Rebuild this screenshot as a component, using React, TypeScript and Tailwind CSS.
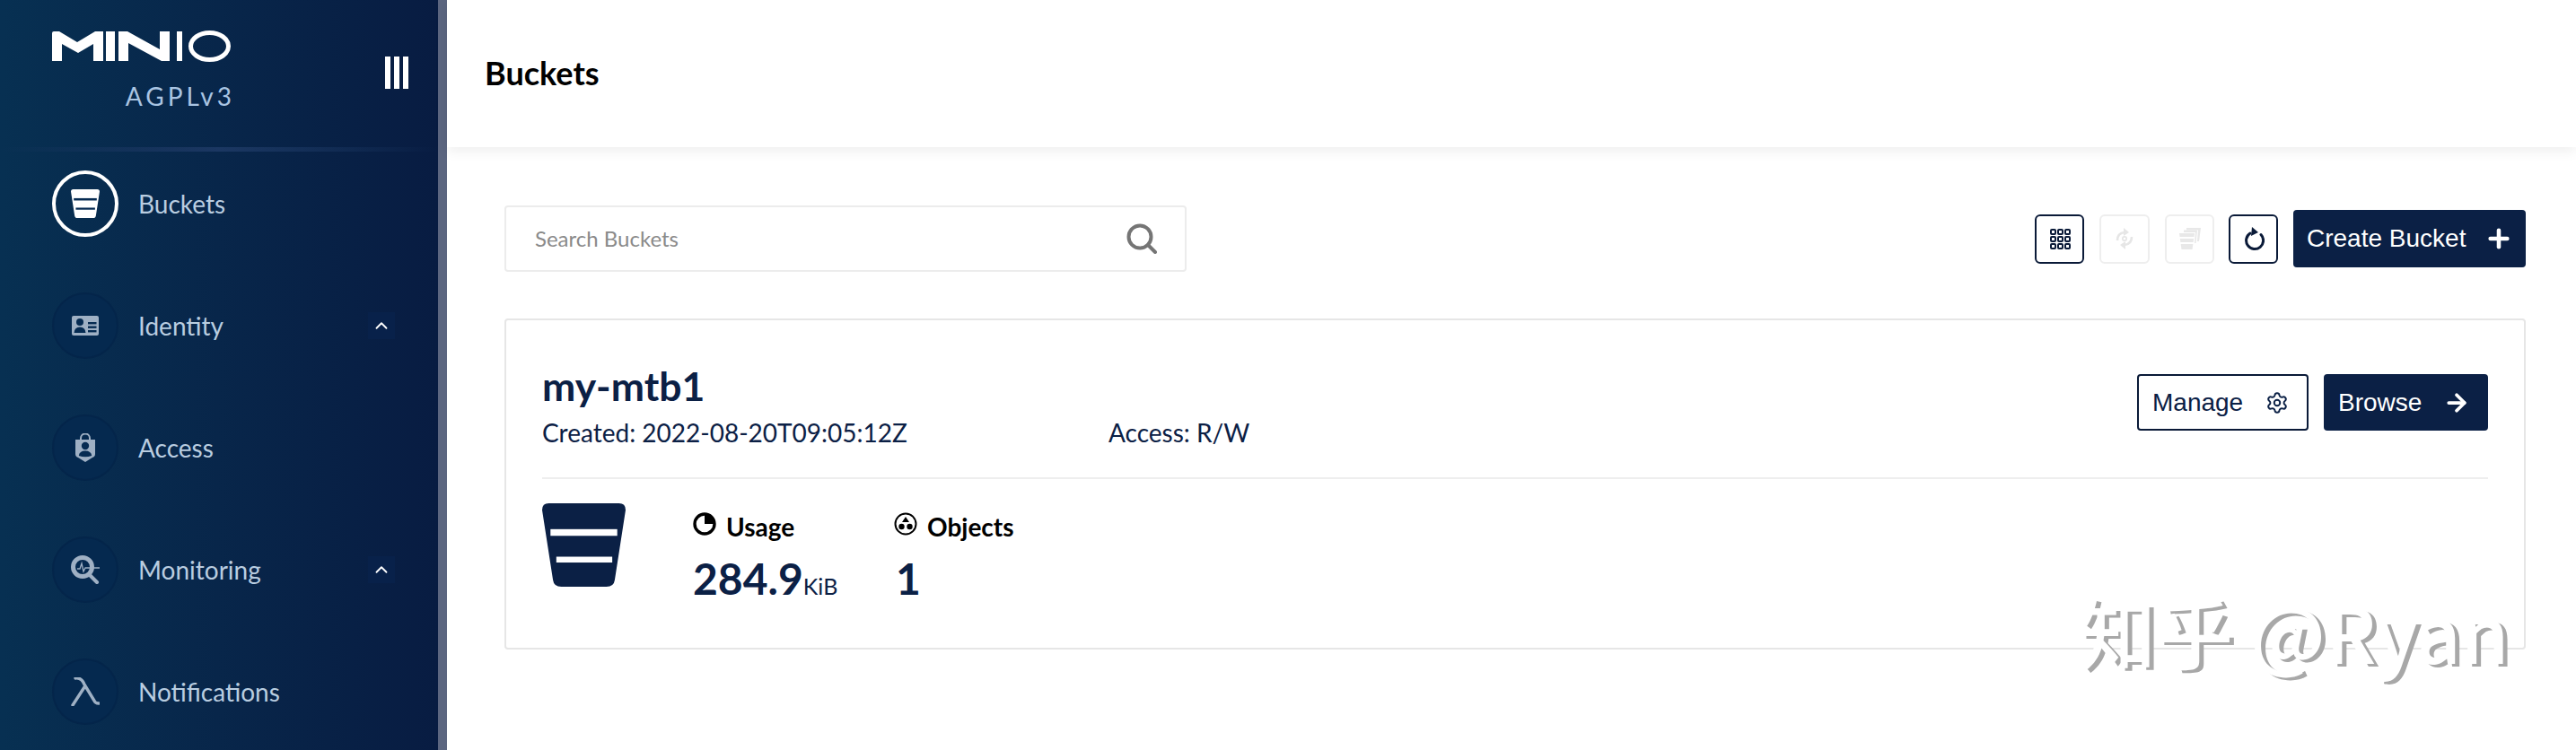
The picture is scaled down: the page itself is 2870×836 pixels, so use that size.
import React from 'react';
import { ChevronUp, Settings, ArrowRight, Plus } from 'lucide-react';

const MinioLogo = () => (
    <svg width="200" height="35" viewBox="0 0 200 35" className="block" fill="#fff">
        <path d="M0 3 Q0 1 2 1 H8 L28 13 L48 1 H57 V34 H46 V15 L29 25 L11 15 V34 H0 Z" />
        <rect x="60" y="1" width="10" height="33" />
        <path d="M74 34 V1 H84 L120 21 V1 H131 V34 H122 L85 14 V34 Z" />
        <rect x="139" y="1" width="6" height="33" />
        <ellipse cx="175.5" cy="17.5" rx="21" ry="15" fill="none" stroke="#fff" strokeWidth="5" />
    </svg>
);

const BucketIcon = ({ size, fill, line }: { size: number; fill: string; line: string }) => (
    <svg width={size} height={size} viewBox="0 0 100 100" className="block">
        <path d="M8 0 H92 Q100 0 100 8 L87 92 Q86 100 77 100 H23 Q14 100 13 92 L0 8 Q0 0 8 0 Z" fill={fill} />
        <rect x="10" y="31" width="80" height="8" fill={line} />
        <rect x="17" y="64" width="67" height="7" fill={line} />
    </svg>
);

const IdentityIcon = () => (
    <svg width="30" height="22" viewBox="0 0 30 22">
        <rect width="30" height="22" rx="2" fill="#9fb0c4" />
        <circle cx="9" cy="7" r="4" fill="#062b52" />
        <path d="M2.5 19 Q3 12.5 9 12.5 Q15 12.5 15.5 19 Z" fill="#062b52" />
        <rect x="18" y="7" width="9.5" height="2.4" fill="#062b52" />
        <rect x="18" y="11.5" width="9.5" height="2.4" fill="#062b52" />
        <rect x="18" y="16" width="9.5" height="2.4" fill="#062b52" />
    </svg>
);

const AccessIcon = () => (
    <svg width="24" height="32" viewBox="0 0 24 32">
        <path d="M7 8 V5.5 a5 5 0 0 1 10 0 V8" fill="none" stroke="#9fb0c4" strokeWidth="2" />
        <path d="M1 7 H23 V23 Q23 26 20 27 L12 32 L4 27 Q1 26 1 23 Z" fill="#9fb0c4" />
        <circle cx="12" cy="14" r="4.2" fill="#062b52" />
        <path d="M4.8 25 Q5.5 19.5 12 19.5 Q18.5 19.5 19.2 25 Q12 27.5 4.8 25 Z" fill="#062b52" />
    </svg>
);

const MonitoringIcon = () => (
    <svg width="32" height="32" viewBox="0 0 32 32">
        <circle cx="13" cy="13" r="10.5" fill="none" stroke="#9fb0c4" strokeWidth="5" />
        <path d="M20 21 L29 30" stroke="#9fb0c4" strokeWidth="4" strokeLinecap="round" />
        <path d="M7 15 H10 L12 9 L14 18 L16 14 H32" fill="none" stroke="#9fb0c4" strokeWidth="1.3" />
    </svg>
);

const LambdaIcon = () => (
    <svg width="32" height="32" viewBox="0 0 32 32">
        <path
            d="M5 1 Q12 0 15 8 L26 26 Q27 29 31 29 M15 11 L2 31"
            fill="none"
            stroke="#9fb0c4"
            strokeWidth="3.4"
            strokeLinecap="round"
        />
    </svg>
);

const GridIcon = () => (
    <svg width="24" height="24" viewBox="0 0 24 24" fill="none" stroke="#0a1a38" strokeWidth="2">
        {[2, 10, 18].map(y =>
            [2, 10, 18].map(x => <rect key={`${x}-${y}`} x={x} y={y} width="5" height="5" rx="1" />)
        )}
    </svg>
);

const RefreshIcon = () => (
    <svg width="24" height="28" viewBox="0 0 24 28" fill="none">
        <path d="M8 8 A9.5 9.5 0 1 0 20 9.5" stroke="#0a1a38" strokeWidth="3" strokeLinecap="round" />
        <path d="M10 1 L17 7 L9 11 Z" fill="#0a1a38" />
    </svg>
);

const ReplicateIcon = () => (
    <svg width="20" height="24" viewBox="0 0 20 24" fill="none" stroke="#e6e6e6" strokeWidth="2.6">
        <path d="M10 5 Q2 6 2 14" />
        <path d="M10 19 Q18 18 18 10" />
        <path d="M9 0 L15 5 L9 9 Z" fill="#e6e6e6" stroke="none" />
        <path d="M11 15 L5 19 L11 24 Z" fill="#e6e6e6" stroke="none" />
        <circle cx="10" cy="12" r="2.2" strokeWidth="1.8" />
    </svg>
);

const MultiBucketIcon = () => (
    <svg width="24" height="24" viewBox="0 0 24 24" fill="#e8e8e8">
        <path d="M8 0 H24 L22 15 H20 L21 2.5 H8 Z" />
        <path d="M5 2.5 H20 L18.5 17 H17 L18 5 H5 Z" />
        <path d="M0 6 H17 L14.5 24 H2.5 Z" />
        <rect x="0" y="10" width="17" height="2" fill="#fff" />
        <rect x="0" y="16" width="17" height="2" fill="#fff" />
    </svg>
);

const UsageIcon = () => (
    <svg width="26" height="26" viewBox="0 0 26 26" className="-mt-[6px]">
        <circle cx="13" cy="13" r="11" fill="none" stroke="#000" strokeWidth="3.4" />
        <path d="M13 2 A11 11 0 0 1 24 13 H13 Z" fill="#000" />
    </svg>
);

const ObjectsIcon = () => (
    <svg width="26" height="26" viewBox="0 0 26 26" className="-mt-[6px]">
        <circle cx="13" cy="13" r="11.5" fill="none" stroke="#000" strokeWidth="2" />
        <path d="M13 5 L17 11 H9 Z" fill="#000" />
        <circle cx="8.5" cy="16" r="3.2" fill="#000" />
        <circle cx="17.5" cy="16" r="3.2" fill="#000" />
    </svg>
);

const navItems = [
    { label: 'Buckets', icon: <BucketIcon size={32} fill="#fff" line="#062b52" />, active: true },
    { label: 'Identity', icon: <IdentityIcon />, chevron: true },
    { label: 'Access', icon: <AccessIcon /> },
    { label: 'Monitoring', icon: <MonitoringIcon />, chevron: true },
    { label: 'Notifications', icon: <LambdaIcon /> },
];

const App: React.FC = () => {
    return (
        <div className="relative flex h-screen overflow-hidden bg-white font-['Lato',sans-serif]">
            <aside className="w-[498px] shrink-0 border-r-[10px] border-[#5c6680] bg-gradient-to-r from-[#073052] to-[#081c42]">
                <div className="flex h-[164px] items-start justify-between pl-[58px] pr-[33px]">
                    <div className="w-[200px] pt-[34px]">
                        <MinioLogo />
                        <div className="mt-[22px] -mr-[4px] text-right text-[28px] leading-[32px] tracking-[4px] text-[#a9c4e2]">
                            AGPLv3
                        </div>
                    </div>
                    <div className="mt-[63px] flex h-[36px] gap-1">
                        <span className="w-[6px] bg-white" />
                        <span className="w-[6px] bg-white" />
                        <span className="w-[6px] bg-white" />
                    </div>
                </div>
                <div className="h-[5px] bg-gradient-to-r from-transparent via-[#1b3762] to-transparent" />
                <nav className="flex flex-col gap-[62px] pt-[21px] pl-[58px] pr-[48px]">
                    {navItems.map(item => (
                        <div key={item.label} className="flex h-[74px] items-center">
                            <div
                                className={`flex h-[74px] w-[74px] items-center justify-center rounded-full ${
                                    item.active
                                        ? 'border-[4px] border-white'
                                        : 'border-[2px] border-[#04254a] bg-[#05294f]'
                                }`}
                            >
                                {item.icon}
                            </div>
                            <span className="ml-[22px] text-[28px] text-[#b9cde0]">{item.label}</span>
                            {item.chevron && (
                                <span className="ml-auto flex h-[30px] w-[30px] items-center justify-center bg-[#08214a]">
                                    <ChevronUp size={22} color="#fff" strokeWidth={2} />
                                </span>
                            )}
                        </div>
                    ))}
                </nav>
            </aside>

            <main className="min-w-0 flex-1">
                <header className="flex h-[164px] items-center bg-white pb-[2px] pl-[42px] shadow-[0_4px_14px_rgba(0,0,0,0.07)]">
                    <h1 className="text-[36px] font-bold text-black">Buckets</h1>
                </header>

                <div className="pt-[65px] pl-[64px] pr-[56px]">
                    <div className="flex items-center justify-between">
                        <div className="flex h-[74px] w-[760px] items-center rounded-[4px] border-2 border-[#ececec] pl-[32px] pr-[31px]">
                            <input
                                placeholder="Search Buckets"
                                className="min-w-0 flex-1 text-[24px] outline-none placeholder:text-[#8a8a8a]"
                            />
                            <svg width="34" height="34" viewBox="0 0 34 34" fill="none" stroke="#757575" strokeWidth="4">
                                <circle cx="15" cy="15" r="12.5" />
                                <path d="M24 24 L32 32" strokeLinecap="round" />
                            </svg>
                        </div>
                        <div className="flex items-center">
                            <button className="flex h-[55px] w-[55px] items-center justify-center rounded-[6px] border-2 border-[#0a1a38]">
                                <GridIcon />
                            </button>
                            <button className="ml-[17px] flex h-[55px] w-[56px] items-center justify-center rounded-[6px] border-2 border-[#eeeeee]">
                                <ReplicateIcon />
                            </button>
                            <button className="ml-[17px] flex h-[55px] w-[55px] items-center justify-center rounded-[6px] border-2 border-[#eeeeee]">
                                <MultiBucketIcon />
                            </button>
                            <button className="ml-[16px] flex h-[55px] w-[55px] items-center justify-center rounded-[6px] border-2 border-[#0a1a38]">
                                <RefreshIcon />
                            </button>
                            <button className="ml-[17px] flex h-[64px] w-[259px] items-center justify-between rounded-[4px] bg-[#0b2045] pl-[15px] pr-[14px] font-['Liberation_Sans',sans-serif] text-[28px] text-white">
                                Create Bucket
                                <Plus size={32} color="#fff" strokeWidth={3.4} />
                            </button>
                        </div>
                    </div>

                    <section className="mt-[52px] h-[369px] rounded-[4px] border-2 border-[#e6e6e6] px-[40px] pt-[48px]">
                        <div className="flex items-start justify-between border-b-2 border-[#eeeeee] pb-[32px]">
                            <div className="text-[#0b2045]">
                                <h2 className="text-[44.5px] leading-[50px] font-bold">my-mtb1</h2>
                                <div className="mt-[9px] flex text-[28px] leading-[36px]">
                                    <span className="w-[631px]">Created: 2022-08-20T09:05:12Z</span>
                                    <span>Access: R/W</span>
                                </div>
                            </div>
                            <div className="mt-[12px] flex gap-[17px] font-['Liberation_Sans',sans-serif] text-[28px]">
                                <button className="flex h-[63px] w-[191px] items-center justify-between rounded-[4px] border-2 border-[#0a1a38] pl-[15px] pr-[20px] text-[#0b2045]">
                                    Manage
                                    <Settings size={26} color="#0b2045" strokeWidth={1.8} />
                                </button>
                                <button className="flex h-[63px] w-[183px] items-center justify-between rounded-[4px] bg-[#0b2045] pl-[16px] pr-[20px] text-white">
                                    Browse
                                    <ArrowRight size={30} color="#fff" strokeWidth={3} />
                                </button>
                            </div>
                        </div>

                        <div className="flex items-start pt-[27px]">
                            <BucketIcon size={93} fill="#0b2045" line="#fff" />
                            <div className="ml-[75px] mt-[8px] w-[224px]">
                                <div className="flex h-[36px] items-center gap-[11px] text-[28px] font-bold text-black">
                                    <UsageIcon />
                                    Usage
                                </div>
                                <div className="mt-[12px] flex items-baseline text-[#0b2045]">
                                    <span className="text-[48px] leading-[56px] font-bold">284.9</span>
                                    <span className="text-[25px]">KiB</span>
                                </div>
                            </div>
                            <div className="mt-[8px]">
                                <div className="flex h-[36px] items-center gap-[11px] text-[28px] font-bold text-black">
                                    <ObjectsIcon />
                                    Objects
                                </div>
                                <div className="mt-[12px] pl-[2px] text-[48px] leading-[56px] font-bold text-[#0b2045]">1</div>
                            </div>
                        </div>
                    </section>
                </div>
            </main>

            <div className="absolute top-[643px] left-[2316px] font-['Noto_Sans_CJK_SC',sans-serif] text-[86px] leading-[120px] font-medium whitespace-nowrap text-white [text-shadow:5px_3px_0_#a8a8a8]">
                知乎 @Ryan
            </div>
        </div>
    );
};

export default App;
